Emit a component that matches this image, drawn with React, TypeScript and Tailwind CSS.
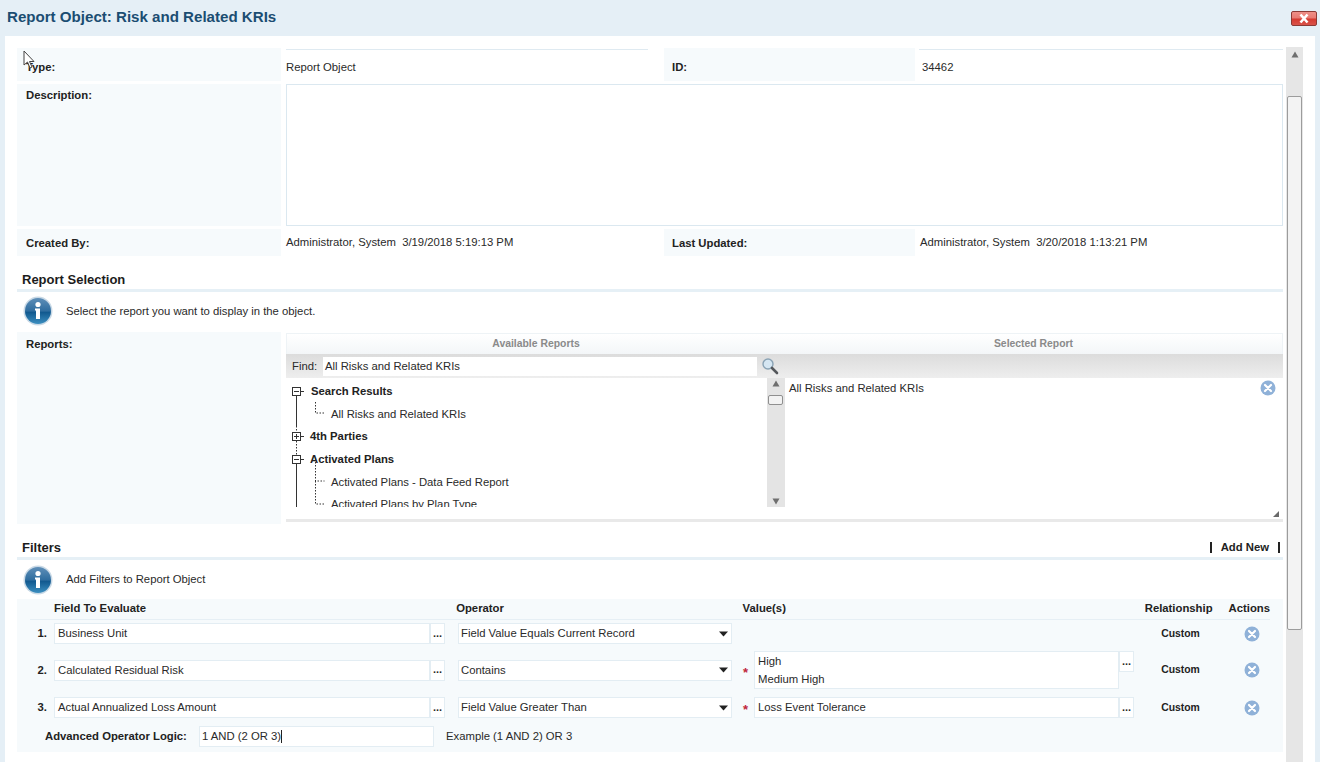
import type { ReactNode } from "react";

const InfoIcon = () => (
  <svg width="30" height="30" viewBox="0 0 30 30" className="shrink-0">
    <defs>
      <linearGradient id="infoFill" x1="0" y1="0" x2="0" y2="1">
        <stop offset="0" stopColor="#5f8fb8" />
        <stop offset="0.5" stopColor="#2f6d9f" />
        <stop offset="0.55" stopColor="#11598f" />
        <stop offset="1" stopColor="#3c8fc0" />
      </linearGradient>
    </defs>
    <circle cx="15" cy="15" r="14.5" fill="#c9d9e6" />
    <circle cx="15" cy="15" r="13" fill="url(#infoFill)" />
    <circle cx="15" cy="8.5" r="2.6" fill="#fff" />
    <path d="M12 12.5h5v10.500h-4v-8.500h-1z" fill="#fff" />
  </svg>
);

const RemoveIcon = () => (
  <svg width="16" height="16" viewBox="0 0 16 16" className="shrink-0">
    <circle cx="8" cy="8" r="7.500" fill="#8fb1d8" />
    <path d="M5 5l6 6M11 5l-6 6" stroke="#fff" strokeWidth="2.200" strokeLinecap="round" />
  </svg>
);

const Dots = ({ className = "" }: { className?: string }) => (
  <div className={`w-[15px] h-[21px] bg-white border border-[#e3edf3] flex justify-center items-center text-[11px] font-bold leading-none pb-[1px] ${className}`}>
    ...
  </div>
);

const Label = ({ children, className = "" }: { children: ReactNode; className?: string }) => (
  <div className={`bg-[#f6fafc] font-bold text-[#222] ${className}`}>{children}</div>
);

const SectionHead = ({ title, right }: { title: string; right?: ReactNode }) => (
  <div className="h-[20px] border-b-[3px] border-[#e6f0f6] pl-[5px] flex justify-between items-start">
    <span className="text-[13px] leading-[15px] font-bold text-[#1c1c1c]">{title}</span>
    {right}
  </div>
);

const Arrow = ({ className = "" }: { className?: string }) => (
  <svg width="16" height="7" viewBox="0 0 16 7" className={className}>
    <path d="M4.500 6.500L8 .5l3.500 6z" fill="#6f6f6f" />
  </svg>
);

const TreeNode = ({ label, bold, x }: { label: string; bold?: boolean; x: number }) => (
  <div className={`h-[22.7px] leading-[22px] whitespace-nowrap ${bold ? "font-bold text-[#222]" : ""}`} style={{ paddingLeft: x }}>
    {label}
  </div>
);

const filters = [
  { n: "1.", field: "Business Unit", op: "Field Value Equals Current Record", h: "h-[27px]", mt: "mt-0" },
  { n: "2.", field: "Calculated Residual Risk", op: "Contains", h: "h-[38px]", mt: "mt-[4px]" },
  { n: "3.", field: "Actual Annualized Loss Amount", op: "Field Value Greater Than", h: "h-[23px]", mt: "mt-[7px]" },
];

const FieldBox = ({ children, w }: { children: ReactNode; w: string }) => (
  <div className={`h-[21px] bg-white border border-[#e3edf3] pl-[3px] leading-[19px] whitespace-nowrap ${w}`}>{children}</div>
);

const Star = () => (
  <span className="w-[22px] self-center text-right pr-[6px] text-[#c0263a] text-[13px] font-bold leading-none pt-[4px]">*</span>
);

export default function App() {
  return (
    <div className="relative w-[1320px] h-[762px] overflow-hidden bg-[#e5eff6] text-[11.3px] text-[#2a2a2a] font-['Liberation_Sans',Arial,sans-serif]">
      {/* title bar */}
      <div className="h-[36px] pl-[7px] pr-[3px] flex items-center justify-between">
        <h1 className="text-[15.1px] font-bold text-[#1b4d72] leading-none -mt-[2px]">Report Object: Risk and Related KRIs</h1>
        <div className="w-[26px] h-[15px] rounded-[2px] border border-[#8c3a35] bg-[linear-gradient(#ee8f87_0%,#e87a72_48%,#d5392f_52%,#d9534a_100%)] flex items-center justify-center">
          <svg width="10" height="11" viewBox="0 0 10 11">
            <path d="M1.500 1.500l7 8M8.500 1.500l-7 8" stroke="#fff" strokeWidth="2.600" />
          </svg>
        </div>
      </div>

      <div className="ml-[5px] w-[1310px] h-[726px] bg-white flex pl-[12px] overflow-hidden">
        <div className="w-[1266px] shrink-0 pt-[12px]">
          {/* type row */}
          <div className="flex h-[33px]">
            <Label className="w-[264px] pl-[9px] pt-[11px]">Type:</Label>
            <div className="w-[362px] ml-[5px] border-t border-[#dfeaf1] mt-[1px] pt-[9px]">Report Object</div>
            <Label className="w-[251px] ml-[16px] pl-[8px] pt-[11px]">ID:</Label>
            <div className="w-[364px] ml-[4px] border-t border-[#dfeaf1] mt-[1px] pt-[9px] pl-[3px]">34462</div>
          </div>
          {/* description */}
          <div className="flex h-[142px] mt-[3px]">
            <Label className="w-[264px] pl-[9px] pt-[3px]">Description:</Label>
            <div className="flex-1 ml-[5px] border border-[#dbe8f0] bg-white" />
          </div>
          {/* created row */}
          <div className="flex h-[27px] mt-[3px]">
            <Label className="w-[264px] pl-[9px] pt-[6px]">Created By:</Label>
            <div className="w-[362px] ml-[5px] pt-[5px]">Administrator, System&nbsp; 3/19/2018 5:19:13 PM</div>
            <Label className="w-[251px] ml-[16px] pl-[8px] pt-[6px]">Last Updated:</Label>
            <div className="ml-[5px] pt-[5px]">Administrator, System&nbsp; 3/20/2018 1:13:21 PM</div>
          </div>

          {/* report selection */}
          <div className="mt-[16px]">
            <SectionHead title="Report Selection" />
          </div>
          <div className="h-[38px] pl-[6px] flex items-center gap-[13px]">
            <InfoIcon />
            <span>Select the report you want to display in the object.</span>
          </div>
          <div className="flex h-[192px] mt-[2px]">
            <Label className="w-[264px] pl-[9px] pt-[4px]">Reports:</Label>
            <div className="flex-1 ml-[5px] mt-[1px] flex flex-col">
              <div className="h-[21px] flex border border-b-0 border-[#eef3f6] bg-[linear-gradient(#fff,#f3f6f8)] font-bold text-[10.400px] text-[#8a8a8a] leading-[19px]">
                <div className="w-[498px] text-center">Available Reports</div>
                <div className="flex-1 text-center">Selected Report</div>
              </div>
              <div className="h-[24px] flex items-center bg-[linear-gradient(#dcdcdc,#eeeeee)]">
                <span className="w-[37px] pl-[6px]">Find:</span>
                <div className="w-[434px] h-[19px] bg-white pl-[2px] leading-[19px]">All Risks and Related KRIs</div>
                <svg width="18" height="18" viewBox="0 0 18 18" className="ml-[4px]">
                  <circle cx="7" cy="7" r="5" fill="#d5e6f2" stroke="#8aa3b5" strokeWidth="1.400" />
                  <path d="M11 11l5 5" stroke="#55585c" strokeWidth="2.600" strokeLinecap="round" />
                </svg>
              </div>
              <div className="h-[129px] flex">
                <div className="relative w-[481px] overflow-hidden pt-[2px]">
                  <TreeNode label="Search Results" bold x={25} />
                  <TreeNode label="All Risks and Related KRIs" x={45} />
                  <TreeNode label="4th Parties" bold x={24} />
                  <TreeNode label="Activated Plans" bold x={24} />
                  <TreeNode label="Activated Plans - Data Feed Report" x={45} />
                  <TreeNode label="Activated Plans by Plan Type" x={45} />
                  <svg width="60" height="129" viewBox="0 0 60 129" className="absolute left-0 top-0">
                    <g fill="#fff" stroke="#333" strokeWidth="1">
                      <rect x="6.500" y="9.500" width="8" height="8" />
                      <rect x="6.500" y="54.500" width="8" height="8" />
                      <rect x="6.500" y="77.500" width="8" height="8" />
                    </g>
                    <g stroke="#333" strokeWidth="1" fill="none">
                      <path d="M8 13.500h5M8 58.500h5M8 81.500h5M10.500 56v5" />
                      <path d="M15 13.500h3M15 58.500h3M15 81.500h3" />
                      <path d="M10.500 18v30M10.500 86v43" />
                      <path d="M10.500 48v6M10.500 63v14" strokeDasharray="1.500 1.500" />
                      <path d="M29.500 24v11h9M29.500 81v22h9M29.500 103v23h9" strokeDasharray="1.500 1.500" />
                    </g>
                  </svg>
                </div>
                <div className="w-[18px] bg-[#e4e4e4] flex flex-col items-center justify-between relative py-[2px]">
                  <Arrow />
                  <div className="absolute top-[17px] left-[1px] w-[15px] h-[10px] bg-[#f2f2f2] border border-[#8f8f8f] rounded-[2px]" />
                  <Arrow className="rotate-180" />
                </div>
                <div className="flex-1 flex justify-between pl-[4px] pr-[7px] pt-[2px]">
                  <span>All Risks and Related KRIs</span>
                  <RemoveIcon />
                </div>
              </div>
              <div className="h-[12px] flex justify-end items-end pr-[4px] pb-[2px]">
                <svg width="6" height="6" viewBox="0 0 6 6">
                  <path d="M6 0v6H0z" fill="#6a6a6a" />
                </svg>
              </div>
              <div className="h-[3px] bg-[#e9e9e9]" />
            </div>
          </div>

          {/* filters */}
          <div className="mt-[16px]">
            <SectionHead
              title="Filters"
              right={
                <div className="flex items-center font-bold text-[#222] pr-[3px] leading-[15px]">
                  <span className="w-[2px] h-[11px] bg-[#222]" />
                  <span className="mx-[9px]">Add New</span>
                  <span className="w-[2px] h-[11px] bg-[#222]" />
                </div>
              }
            />
          </div>
          <div className="h-[39px] pl-[6px] flex items-center gap-[13px]">
            <InfoIcon />
            <span>Add Filters to Report Object</span>
          </div>
          <div className="bg-[#f6fafc] h-[153px]">
            <div className="h-[21px] mx-[13px] border-b border-[#e6eff5] font-bold text-[#222] leading-[19px] flex">
              <span className="w-[427px] pl-[24px]">Field To Evaluate</span>
              <span className="w-[287px]">Operator</span>
              <span className="w-[403px]">Value(s)</span>
              <span className="w-[84px]">Relationship</span>
              <span>Actions</span>
            </div>
            {filters.map((f, i) => (
              <div key={f.n} className={`flex items-center ${f.h} ${f.mt}`}>
                <span className="w-[30px] text-right font-bold text-[#222]">{f.n}</span>
                <FieldBox w="w-[376px] ml-[7px]">{f.field}</FieldBox>
                <Dots className="w-[14px]" />
                <div className="w-[274px] ml-[13px] h-[21px] bg-white border border-[#e3edf3] pl-[2px] pr-[3px] leading-[19px] flex justify-between items-center">
                  <span>{f.op}</span>
                  <svg width="9" height="6" viewBox="0 0 9 6">
                    <path d="M0 .5h9L4.500 5.500z" fill="#222" />
                  </svg>
                </div>
                <div className="w-[403px] flex items-start">
                  {i > 0 && <Star />}
                  {i === 1 && (
                    <>
                      <div className="w-[365px] h-[38px] bg-white border border-[#e3edf3] pl-[3px] leading-[18px]">
                        High
                        <br />
                        Medium High
                      </div>
                      <Dots />
                    </>
                  )}
                  {i === 2 && (
                    <>
                      <FieldBox w="w-[365px]">Loss Event Tolerance</FieldBox>
                      <Dots />
                    </>
                  )}
                </div>
                <span className="w-[91px] text-center font-bold text-[10.400px] text-[#222]">Custom</span>
                <div className="w-[52px] flex justify-center">
                  <RemoveIcon />
                </div>
              </div>
            ))}
            <div className="flex items-center h-[22px] mt-[6px]">
              <span className="w-[182px] pl-[28px] font-bold text-[#222]">Advanced Operator Logic:</span>
              <div className="w-[235px] h-[21px] bg-white border border-[#e3edf3] pl-[2px] leading-[19px]">
                1 AND (2 OR 3)
                <span className="inline-block w-[1px] h-[13px] bg-[#222] align-middle" />
              </div>
              <span className="ml-[12px]">Example (1 AND 2) OR 3</span>
            </div>
          </div>
        </div>

        {/* page scrollbar */}
        <div className="w-[17px] ml-[3px] mt-[11px] bg-[#e6e6e6] flex flex-col items-center pt-[4px] shrink-0">
          <Arrow />
          <div className="w-[15px] h-[534px] mt-[38px] bg-[#f3f3f3] border border-[#9c9c9c] rounded-[2px]" />
        </div>
      </div>

      {/* mouse pointer in the capture */}
      <svg width="13" height="19" viewBox="0 0 13 19" className="absolute left-[23px] top-[50px]">
        <path d="M1 1v14l3.500-3 2.500 6 2-1-2.500-5.500H11z" fill="#fff" stroke="#444" strokeWidth="1" />
      </svg>
    </div>
  );
}
